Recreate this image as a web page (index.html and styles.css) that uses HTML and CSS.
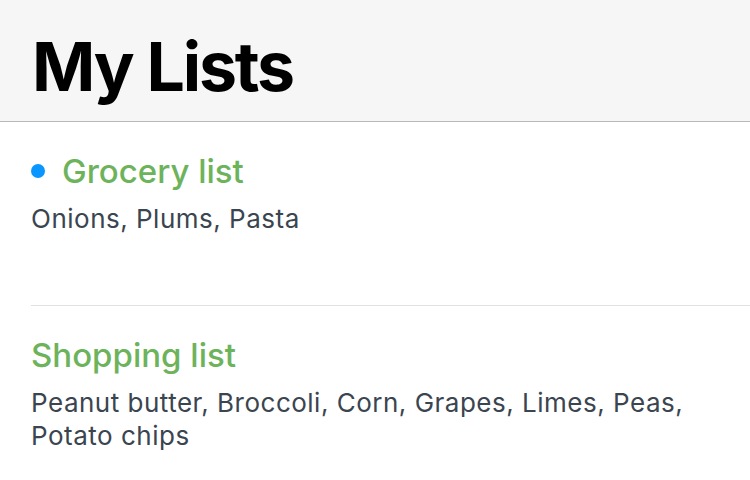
FILE: index.html
```html
<!DOCTYPE html>
<html>
<head>
    <title>My Lists</title>
    <link rel="stylesheet" href="styles.css">
</head>
<body>
    <div class="header">
        <h1>My Lists</h1>
    </div>

    <div class="lists">
        <div class="list-item">
            <div class="list-title">
                <span class="unread-dot"></span>
                <span>Grocery list</span>
            </div>
            <div class="list-items">Onions, Plums, Pasta</div>
        </div>

        <div class="list-item">
            <div class="list-title">
                <span>Shopping list</span>
            </div>
            <div class="list-items">Peanut butter, Broccoli, Corn, Grapes, Limes, Peas, Potato chips</div>
        </div>
    </div>
</body>
</html>
```

FILE: styles.css
```css
body {
    margin: 0;
    font-family: Inter, "Noto Sans", sans-serif;
    background: white;
}
.header {
    background: #f6f6f6;
    border-bottom: 1px solid #b8b8b8;
    height: 122px;
    box-sizing: border-box;
    padding: 24px 32px 0;
}
.header h1 {
    margin: 0;
    font-size: 68px;
    font-weight: 700;
    letter-spacing: -2.2px;
    color: black;
    line-height: 84px;
}
.lists {
    padding-left: 31px;
}
.list-item {
    padding: 29px 40px 70px 0;
    border-bottom: 1px solid #e0e0e0;
}
.list-item:last-child {
    border-bottom: none;
    padding-bottom: 0;
}
.list-title {
    display: flex;
    align-items: center;
    gap: 17px;
    font-size: 33px;
    font-weight: 500;
    color: #6db35c;
    line-height: 40px;
}
.unread-dot {
    width: 14px;
    height: 14px;
    border-radius: 50%;
    background: #0a96ff;
}
.list-items {
    margin-top: 11px;
    font-size: 26px;
    letter-spacing: 0.5px;
    line-height: 33px;
    color: #3a4550;
}
```
